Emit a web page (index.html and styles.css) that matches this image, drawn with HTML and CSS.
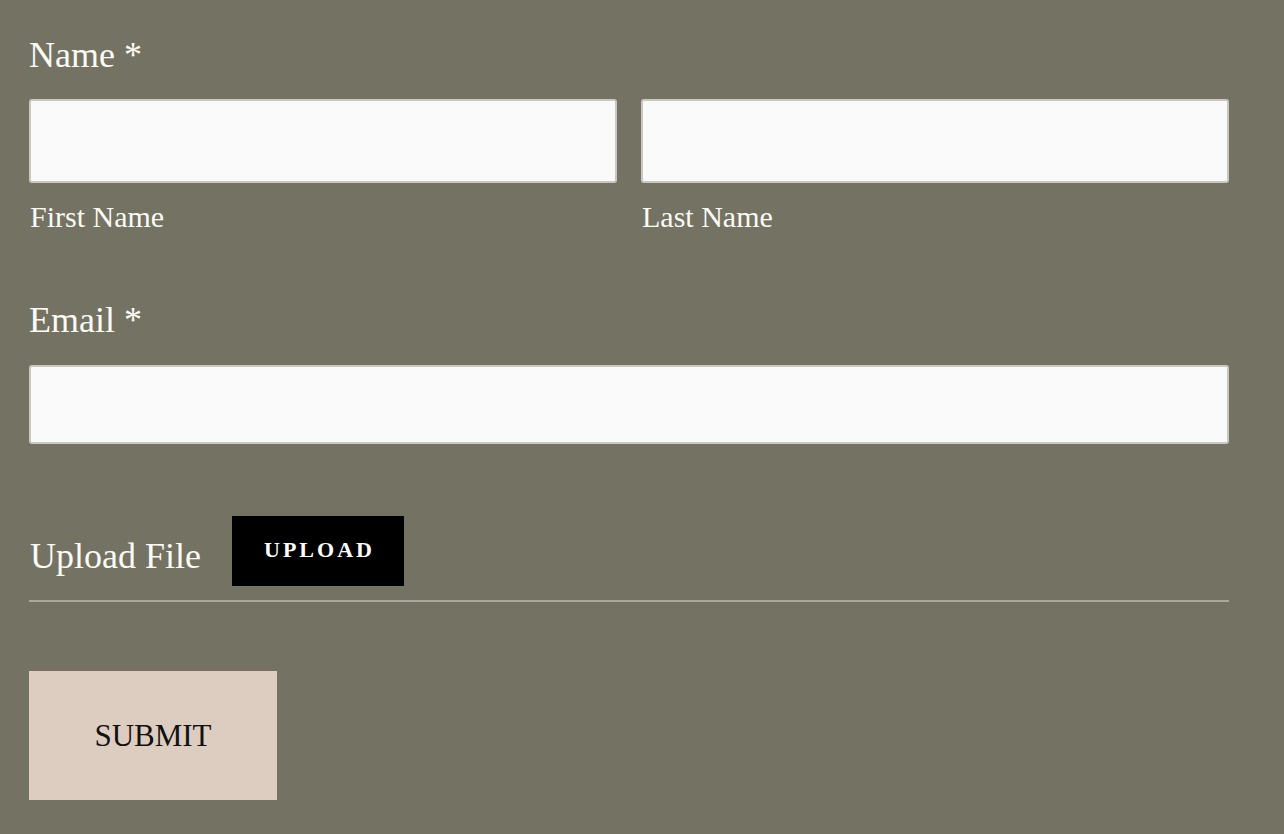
FILE: index.html
```html
<!DOCTYPE html>
<html lang="en">
<head>
<meta charset="utf-8">
<title>Contact form</title>
<link rel="stylesheet" href="styles.css">
</head>
<body>
<form class="form">
  <div class="field">
    <label class="label">Name <span class="req">*</span></label>
    <div class="name-row">
      <div class="name-col">
        <input class="input input-name" type="text">
        <span class="sublabel">First Name</span>
      </div>
      <div class="name-col">
        <input class="input input-name" type="text">
        <span class="sublabel">Last Name</span>
      </div>
    </div>
  </div>
  <div class="field field-email">
    <label class="label">Email <span class="req">*</span></label>
    <input class="input input-email" type="email">
  </div>
  <div class="upload-row">
    <span class="upload-label">Upload File</span>
    <button class="upload-btn" type="button">UPLOAD</button>
  </div>
  <div class="divider"></div>
  <button class="submit-btn" type="button">SUBMIT</button>
</form>
</body>
</html>
```
FILE: styles.css
```css
* { box-sizing: border-box; }
html, body { margin: 0; padding: 0; }
body {
  background: #747263;
  color: #fbfaf4;
  font-family: "Liberation Serif", "Times New Roman", serif;
  width: 1284px;
  height: 834px;
  overflow: hidden;
}
.form {
  display: flex;
  flex-direction: column;
  width: 1200px;
  margin: 0 0 0 29px;
  padding-top: 35px;
}
.field { display: flex; flex-direction: column; }
.label {
  font-size: 36px;
  line-height: 40px;
  margin-bottom: 24px;
}
.name-row {
  display: flex;
  gap: 24px;
}
.name-col {
  flex: 1;
  display: flex;
  flex-direction: column;
}
.input {
  display: block;
  width: 100%;
  background: #fafafa;
  border: 2px solid #c9c7c0;
  border-radius: 3px;
  outline: none;
  margin: 0;
}
.input-name { height: 84px; }
.input-email { height: 79px; }
.sublabel {
  font-size: 30px;
  line-height: 34px;
  margin-top: 17px;
  padding-left: 1px;
}
.field-email { margin-top: 66px; }
.field-email .label { margin-bottom: 25px; }
.upload-row {
  display: flex;
  align-items: flex-end;
  gap: 31px;
  margin-top: 72px;
}
.upload-label {
  font-size: 36px;
  line-height: 40px;
  margin-bottom: 10px;
  padding-left: 1px;
}
.upload-btn {
  width: 172px;
  height: 70px;
  background: #000;
  color: #fff;
  border: none;
  font-family: "Liberation Serif", "Times New Roman", serif;
  font-weight: bold;
  font-size: 22px;
  letter-spacing: 3px;
  padding: 0 0 2px 3px;
  cursor: pointer;
}
.divider {
  height: 2px;
  background: #a9a7a0;
  margin-top: 14px;
}
.submit-btn {
  align-self: flex-start;
  width: 248px;
  height: 129px;
  margin-top: 69px;
  background: #ddcdc0;
  color: #111;
  border: none;
  font-family: "Liberation Serif", "Times New Roman", serif;
  font-size: 31px;
  padding: 0;
  cursor: pointer;
}
```
